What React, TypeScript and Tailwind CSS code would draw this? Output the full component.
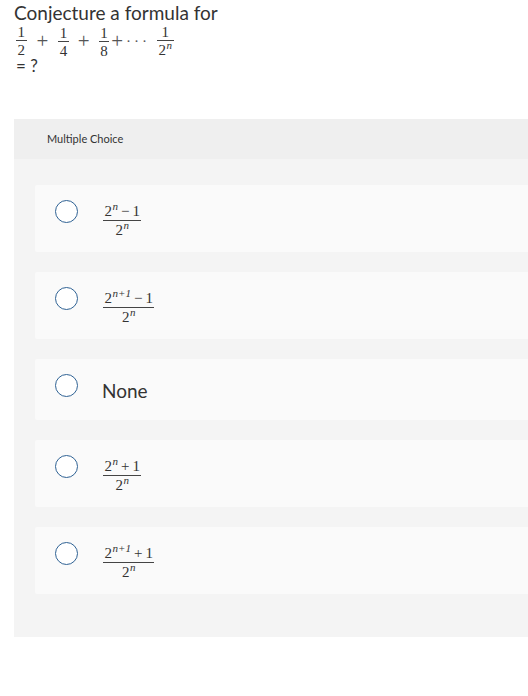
import React from "react";

const sans = "font-['Lato','Open_Sans',sans-serif]";
const serif = "font-['Liberation_Serif','DejaVu_Serif',serif]";

// Stacked fraction in the style of KaTeX output
const Frac = ({
  num,
  den,
  size = "text-[15px]",
}: {
  num: React.ReactNode;
  den: React.ReactNode;
  size?: string;
}) => (
  <span
    className={`inline-flex flex-col items-center align-middle ${serif} ${size} text-[#333]`}
  >
    <span className="px-[1.5px] leading-[12px] pb-[2px] whitespace-nowrap">{num}</span>
    <span className="w-full border-t border-[#444]" />
    <span className="px-[1.5px] leading-[12px] pt-[3px] whitespace-nowrap">{den}</span>
  </span>
);

const Pow = ({ exp }: { exp: React.ReactNode }) => (
  <span>
    2<sup className="text-[11px] italic leading-none ml-[0.5px] -top-[0.55em]">{exp}</sup>
  </span>
);

const Op = ({ c }: { c: string }) => <span className="mx-[3px]">{c}</span>;

const options: { key: string; content: React.ReactNode }[] = [
  {
    key: "a",
    content: (
      <Frac
        num={
          <>
            <Pow exp="n" />
            <Op c="−" />1
          </>
        }
        den={<Pow exp="n" />}
      />
    ),
  },
  {
    key: "b",
    content: (
      <Frac
        num={
          <>
            <Pow exp="n+1" />
            <Op c="−" />1
          </>
        }
        den={<Pow exp="n" />}
      />
    ),
  },
  {
    key: "c",
    content: (
      <span className={`${sans} text-[19px] text-[#333] leading-[20px] mt-[2px] -ml-[1px]`}>
        None
      </span>
    ),
  },
  {
    key: "d",
    content: (
      <Frac
        num={
          <>
            <Pow exp="n" />
            <Op c="+" />1
          </>
        }
        den={<Pow exp="n" />}
      />
    ),
  },
  {
    key: "e",
    content: (
      <Frac
        num={
          <>
            <Pow exp="n+1" />
            <Op c="+" />1
          </>
        }
        den={<Pow exp="n" />}
      />
    ),
  },
];

export default function App() {
  return (
    <div className="min-h-[696px] w-[528px] bg-white overflow-hidden">
      {/* Question */}
      <div className={`px-[14px] pt-[2px] ${sans} text-[19px] text-[#333]`}>
        <div className="leading-[22px]">Conjecture a formula for</div>
        <div className="flex items-center h-[30px] pl-[2px] mt-[2px]">
          <Frac num="1" den="2" />
          <span className={`${serif} ml-[10px] text-[21px] leading-none text-[#555]`}>+</span>
          <span className="ml-[10px]">
            <Frac num="1" den="4" />
          </span>
          <span className={`${serif} ml-[9px] text-[21px] leading-none text-[#555]`}>+</span>
          <span className="ml-[9px]">
            <Frac num="1" den="8" />
          </span>
          <span className={`${serif} ml-[2px] text-[21px] leading-none text-[#555]`}>+</span>
          <span className={`${serif} ml-[3px] text-[15px] leading-none tracking-[3px] text-[#555] mt-[1px]`}>
            ···
          </span>
          <span className="ml-[7px]">
            <Frac num="1" den={<Pow exp="n" />} />
          </span>
        </div>
        <div className="leading-[18px] pl-[2px] text-[17px] mt-[1px]">= ?</div>
      </div>

      {/* Multiple choice panel */}
      <div className="ml-[14px] mt-[44px] bg-[#f4f4f4]">
        <div className={`h-[40px] bg-[#efefef] pl-[33px] flex items-center ${sans} text-[11px] text-[#333]`}>
          Multiple Choice
        </div>
        <div className="pl-[21px] pt-[26px] pb-[43px] flex flex-col gap-[20px]">
          {options.map((o) => (
            <div
              key={o.key}
              className="bg-[#fafafa] min-h-[61px] flex items-start pl-[20px] pt-[15px] pb-[15px] rounded-l-[2px]"
            >
              <span className="w-[23px] h-[23px] shrink-0 rounded-full border-[1.5px] border-[#2f6294] bg-white" />
              <div className="ml-[25px] mt-[5px] flex">{o.content}</div>
            </div>
          ))}
        </div>
      </div>
    </div>
  );
}
